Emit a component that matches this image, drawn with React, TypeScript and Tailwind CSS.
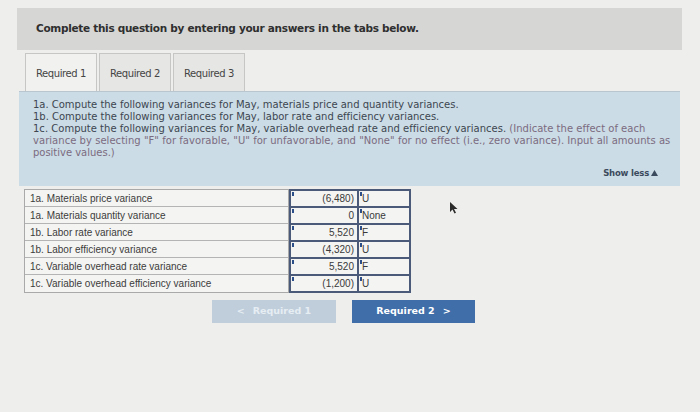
import type { ReactNode } from "react";

const ROWS = [
  { label: "1a. Materials price variance", amount: "(6,480)", effect: "U" },
  { label: "1a. Materials quantity variance", amount: "0", effect: "None" },
  { label: "1b. Labor rate variance", amount: "5,520", effect: "F" },
  { label: "1b. Labor efficiency variance", amount: "(4,320)", effect: "U" },
  { label: "1c. Variable overhead rate variance", amount: "5,520", effect: "F" },
  { label: "1c. Variable overhead efficiency variance", amount: "(1,200)", effect: "U" },
];

const TABS = ["Required 1", "Required 2", "Required 3"];

// tiny blue flag drawn in the corner of every input cell
const Flag = () => (
  <span className="absolute left-[1px] top-[1px] h-[4px] w-[2px] bg-[#2c4f8a]" />
);

const Cell = ({ children, className = "" }: { children: ReactNode; className?: string }) => (
  <div className={`relative flex items-center ${className}`}>
    <Flag />
    {children}
  </div>
);

export default function App() {
  return (
    <div
      className="relative h-[412px] w-[700px] overflow-hidden bg-[#eeeeec] text-[#3a3a3a]"
      style={{ fontFamily: '"DejaVu Sans", Verdana, sans-serif' }}
    >
      <div className="ml-[17px] mr-[18px] mt-[8px] flex h-[42px] items-center bg-[#d6d6d4] pl-[19px]">
        <p className="text-[10.5px] font-bold tracking-[-0.3px] text-[#2f2f2f]">
          Complete this question by entering your answers in the tabs below.
        </p>
      </div>

      <div className="ml-[25px] mt-[3px] flex h-[38px] gap-[2px]">
        {TABS.map((t, i) => (
          <div
            key={t}
            className={`flex w-[72px] items-center justify-center border border-b-0 border-[#c6c6c4] pt-[1px] text-[10px] tracking-[-0.4px] text-[#454545] ${
              i === 0 ? "bg-[#f1f1ef]" : "bg-[#e6e6e4]"
            }`}
          >
            {t}
          </div>
        ))}
      </div>

      <div className="ml-[19px] mr-[20px] h-[95px] border-t border-[#b9c6cf] bg-[#cbdce6] pl-[14px] pr-[10px] pt-[7px] text-[10px] leading-[12px] tracking-[-0.02px] text-[#3d4650]">
        <p>1a. Compute the following variances for May, materials price and quantity variances.</p>
        <p>1b. Compute the following variances for May, labor rate and efficiency variances.</p>
        <p className="whitespace-nowrap tracking-[0.01px]">
          1c. Compute the following variances for May, variable overhead rate and efficiency variances.{" "}
          <span className="text-[#7b6b80]">(Indicate the effect of each</span>
        </p>
        <p className="whitespace-nowrap tracking-[0.04px] text-[#7b6b80]">
          variance by selecting "F" for favorable, "U" for unfavorable, and "None" for no effect (i.e., zero variance). Input all amounts as
        </p>
        <p className="text-[#7b6b80]">positive values.)</p>
        <div className="mr-[12px] mt-[8px] flex justify-end">
          <span className="flex items-center gap-[2px] text-[8.5px] font-bold tracking-[-0.2px] text-[#3b4a5c]">
            Show less
            <svg width="7" height="6" viewBox="0 0 7 6">
              <path d="M3.5 0 L7 6 L0 6 Z" fill="#3b4a5c" />
            </svg>
          </span>
        </div>
      </div>

      <div
        className="ml-[24px] mt-[3px] flex"
        style={{ fontFamily: '"Liberation Sans", Arial, sans-serif' }}
      >
        <div className="w-[265px] border border-[#a9a9a9] bg-[#f4f4f2]">
          {ROWS.map((r, i) => (
            <div
              key={r.label}
              className={`flex items-center pl-[5px] text-[10px] text-[#3c3c3c] ${
                i > 0 ? "h-[17px] border-t border-[#b4b4b4]" : "h-[16px]"
              }`}
            >
              {r.label}
            </div>
          ))}
        </div>
        <div className="w-[68px] border-2 border-r-0 border-[#4a5a78] bg-[#f4f4f2]">
          {ROWS.map((r, i) => (
            <Cell
              key={r.label}
              className={`justify-end pr-[3px] text-[10px] text-[#3a3a3a] ${
                i > 0 ? "h-[17px] border-t-2 border-[#4a5a78]" : "h-[15px]"
              }`}
            >
              {r.amount}
            </Cell>
          ))}
        </div>
        <div className="w-[54px] border-2 border-[#4a5a78] bg-[#f4f4f2]">
          {ROWS.map((r, i) => (
            <Cell
              key={r.label}
              className={`pl-[3px] text-[10px] text-[#3a3a3a] ${
                i > 0 ? "h-[17px] border-t-2 border-[#4a5a78]" : "h-[15px]"
              }`}
            >
              {r.effect}
            </Cell>
          ))}
        </div>
      </div>

      <div className="ml-[212px] mt-[7px] flex gap-[16px]">
        <div className="flex h-[23px] w-[124px] items-center justify-center gap-[8px] bg-[#c0cedb] text-[9.5px] font-bold text-[#e6edf3]">
          <span>&lt;</span>
          <span>Required 1</span>
        </div>
        <div className="flex h-[23px] w-[123px] items-center justify-center gap-[8px] bg-[#3f6ea9] text-[9.5px] font-bold text-white">
          <span>Required 2</span>
          <span>&gt;</span>
        </div>
      </div>

      {/* mouse pointer */}
      <svg className="absolute left-[450px] top-[202px]" width="8" height="12" viewBox="0 0 8 12">
        <path d="M0 0 L0 10 L2.5 7.5 L4.5 11.5 L6 10.8 L4 7 L7.5 7 Z" fill="#2a2a2a" />
      </svg>
    </div>
  );
}
